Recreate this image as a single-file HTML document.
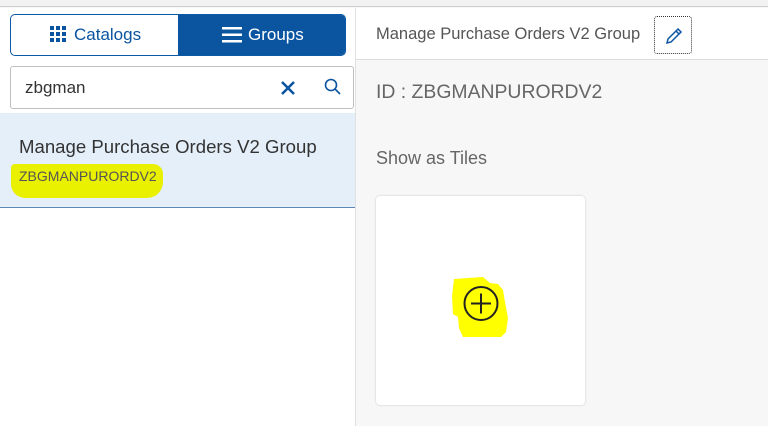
<!DOCTYPE html><html><head><style>
body{margin:0;width:768px;height:426px;background:#f7f7f7;font-family:"Liberation Sans",sans-serif;position:relative;overflow:hidden}
div{position:absolute;box-sizing:border-box}
</style></head><body>
<div style="left:0;top:0;width:768px;height:7px;background:#f2f2f2;border-bottom:1px solid #cfcfcf"></div>
<div style="left:0;top:8px;width:356px;height:418px;background:#fff;border-right:1px solid #e0e0e0"></div>
<div style="left:10px;top:14px;width:336px;height:42px;border:1px solid #0a5aa8;border-radius:5px;overflow:hidden;background:#fff">
 <div style="left:167px;top:0;width:169px;height:42px;background:#0a54a0"></div>
 <div style="left:39px;top:11px;width:16px;height:16px">
  <svg width="16" height="16" fill="#0a54a0"><rect x="0" y="0" width="4" height="4"/><rect x="6" y="0" width="4" height="4"/><rect x="12" y="0" width="4" height="4"/><rect x="0" y="6" width="4" height="4"/><rect x="6" y="6" width="4" height="4"/><rect x="12" y="6" width="4" height="4"/><rect x="0" y="12" width="4" height="4"/><rect x="6" y="12" width="4" height="4"/><rect x="12" y="12" width="4" height="4"/></svg></div>
 <div style="left:63px;top:10px;font-size:17px;color:#0a54a0">Catalogs</div>
 <div style="left:211px;top:12px;width:20px;height:16px"><svg width="20" height="16" fill="#fff"><rect y="0" width="20" height="2.5"/><rect y="6.5" width="20" height="2.5"/><rect y="13" width="20" height="2.5"/></svg></div>
 <div style="left:237px;top:10px;font-size:17px;color:#fff">Groups</div>
</div>
<div style="left:10px;top:66px;width:344px;height:43px;border:1px solid #bfbfbf;border-radius:3px;background:#fff">
 <div style="left:14px;top:11px;font-size:17px;color:#333">zbgman</div>
 <svg style="position:absolute;left:270px;top:14px" width="14" height="14" stroke="#0a54a0" stroke-width="2.5"><path d="M1 1L13 13M13 1L1 13"/></svg>
 <svg style="position:absolute;left:313px;top:11px" width="18" height="18" fill="none" stroke="#0a54a0" stroke-width="1.6"><circle cx="7" cy="7" r="5.5"/><path d="M11 11L16 16"/></svg>
</div>
<div style="left:0;top:113px;width:355px;height:95px;background:#e4eff9;border-bottom:1px solid #5c88b8">
 <div style="left:19px;top:23px;font-size:18.6px;color:#333">Manage Purchase Orders V2 Group</div>
 <div style="left:11px;top:51px;width:152px;height:34px;background:#e9f000;border-radius:4px 10px 16px 14px"></div>
 <div style="left:19px;top:55px;font-size:14px;color:#555">ZBGMANPURORDV2</div>
</div>
<div style="left:356px;top:8px;width:412px;height:52px;background:#fff;border-bottom:1px solid #ddd">
 <div style="left:20px;top:17px;font-size:16.5px;color:#555">Manage Purchase Orders V2 Group</div>
 <div style="left:298px;top:8px;width:38px;height:38px;border:1px dotted #333;border-radius:3px">
  <svg style="position:absolute;left:9px;top:9px" width="20" height="20" fill="none" stroke="#0a54a0" stroke-width="1.5"><path d="M3 17L4 13L14 3L17 6L7 16Z M12 5L15 8"/></svg></div>
</div>
<div style="left:376px;top:81px;font-size:19.4px;color:#666">ID : ZBGMANPURORDV2</div>
<div style="left:376px;top:148px;font-size:18px;color:#666">Show as Tiles</div>
<div style="left:376px;top:196px;width:209px;height:209px;background:#fff;border-radius:4px;box-shadow:0 0 2px rgba(0,0,0,.2)"></div>
<svg style="position:absolute;left:450px;top:276px" width="62" height="62"><path d="M4 3L33 1L40 7L48 8L53 14L55 26L58 42L56 56L51 61L13 61L9 52L8 41L3 38L2 20Z" fill="#ffff00"/><circle cx="31" cy="27.5" r="16.5" fill="none" stroke="#222" stroke-width="2"/><path d="M21 27.5H41M31 17.5V37.5" stroke="#222" stroke-width="2"/></svg>
</body></html>
